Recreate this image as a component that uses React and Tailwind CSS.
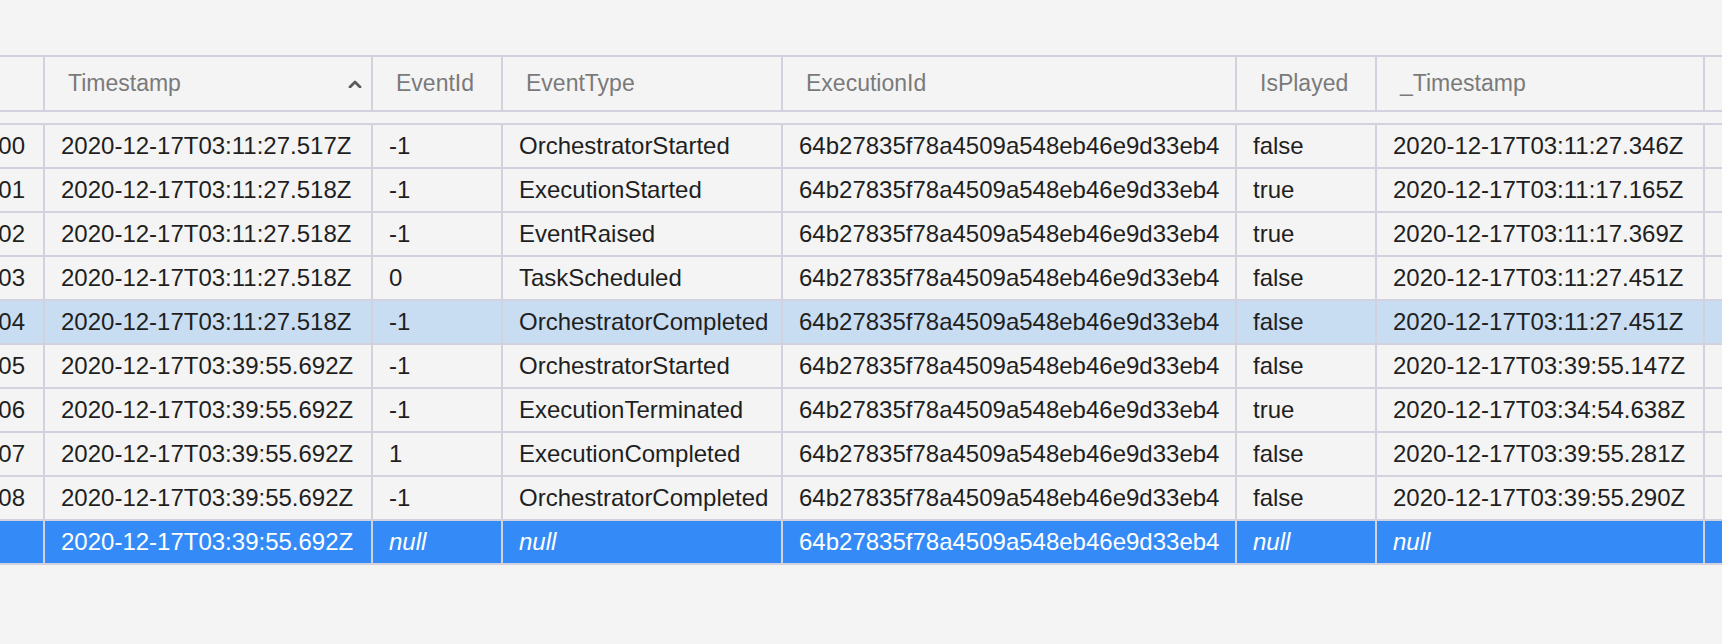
import React from "react";

const rows = [
  ["00", "2020-12-17T03:11:27.517Z", "-1", "OrchestratorStarted", "64b27835f78a4509a548eb46e9d33eb4", "false", "2020-12-17T03:11:27.346Z"],
  ["01", "2020-12-17T03:11:27.518Z", "-1", "ExecutionStarted", "64b27835f78a4509a548eb46e9d33eb4", "true", "2020-12-17T03:11:17.165Z"],
  ["02", "2020-12-17T03:11:27.518Z", "-1", "EventRaised", "64b27835f78a4509a548eb46e9d33eb4", "true", "2020-12-17T03:11:17.369Z"],
  ["03", "2020-12-17T03:11:27.518Z", "0", "TaskScheduled", "64b27835f78a4509a548eb46e9d33eb4", "false", "2020-12-17T03:11:27.451Z"],
  ["04", "2020-12-17T03:11:27.518Z", "-1", "OrchestratorCompleted", "64b27835f78a4509a548eb46e9d33eb4", "false", "2020-12-17T03:11:27.451Z"],
  ["05", "2020-12-17T03:39:55.692Z", "-1", "OrchestratorStarted", "64b27835f78a4509a548eb46e9d33eb4", "false", "2020-12-17T03:39:55.147Z"],
  ["06", "2020-12-17T03:39:55.692Z", "-1", "ExecutionTerminated", "64b27835f78a4509a548eb46e9d33eb4", "true", "2020-12-17T03:34:54.638Z"],
  ["07", "2020-12-17T03:39:55.692Z", "1", "ExecutionCompleted", "64b27835f78a4509a548eb46e9d33eb4", "false", "2020-12-17T03:39:55.281Z"],
  ["08", "2020-12-17T03:39:55.692Z", "-1", "OrchestratorCompleted", "64b27835f78a4509a548eb46e9d33eb4", "false", "2020-12-17T03:39:55.290Z"],
];

const lastRow = ["", "2020-12-17T03:39:55.692Z", null, null, "64b27835f78a4509a548eb46e9d33eb4", null, null];

const headers = ["", "Timestamp", "EventId", "EventType", "ExecutionId", "IsPlayed", "_Timestamp", ""];

const gridCols = "grid grid-cols-[45px_328px_130px_280px_454px_140px_328px_200px]";

function Caret() {
  return (
    <svg width="14" height="9" viewBox="0 0 14 9" className="shrink-0">
      <polyline points="2,8 7,3 12,8" fill="none" stroke="#5a5a5a" strokeWidth="2.8" strokeLinecap="round" strokeLinejoin="round" />
    </svg>
  );
}

export default function App() {
  return (
    <div
      className="w-[1722px] h-[644px] overflow-hidden bg-[#f4f4f4]"
      style={{ fontFamily: '"Liberation Sans", Arial, sans-serif' }}
    >
      {/* header */}
      <div className={`${gridCols} mt-[55px] h-[57px] border-y-2 border-[#d2d2de]`}>
        {headers.map((h, i) => (
          <div
            key={i}
            className="flex items-center justify-between border-r-2 border-[#d2d2de] pl-[23px] pr-[9px] text-[23px] text-[#7a7a7a] whitespace-nowrap overflow-hidden"
          >
            <span>{h}</span>
            {h === "Timestamp" && <Caret />}
          </div>
        ))}
      </div>

      {/* body */}
      <div className="mt-[11px] border-t-2 border-[#d2d2de]">
        {rows.map((r, ri) => (
          <div
            key={ri}
            className={`${gridCols} h-[44px] border-b-2 border-[#d2d2de] ${ri === 4 ? "bg-[#c8ddf2]" : ""}`}
          >
            <div className="flex items-center justify-end border-r-2 border-[#d2d2de] pr-[18px] text-[24px] text-[#1f1f1f] overflow-hidden whitespace-nowrap">
              {r[0]}
            </div>
            {r.slice(1).map((c, ci) => (
              <div
                key={ci}
                className="flex items-center border-r-2 border-[#d2d2de] pl-[16px] text-[24px] text-[#1f1f1f] whitespace-nowrap overflow-hidden"
              >
                {c}
              </div>
            ))}
            <div className="border-r-2 border-[#d2d2de]" />
          </div>
        ))}
        <div className={`${gridCols} h-[44px] border-b-2 border-[#d2d2de] bg-[#348bf7]`}>
          <div className="border-r-2 border-[#d2d2de]" />
          {lastRow.slice(1).map((c, ci) => (
            <div
              key={ci}
              className={`flex items-center border-r-2 border-[#d2d2de] pl-[16px] text-[24px] text-white whitespace-nowrap overflow-hidden ${c === null ? "italic" : ""}`}
            >
              {c === null ? "null" : c}
            </div>
          ))}
          <div className="border-r-2 border-[#d2d2de]" />
        </div>
      </div>
    </div>
  );
}
